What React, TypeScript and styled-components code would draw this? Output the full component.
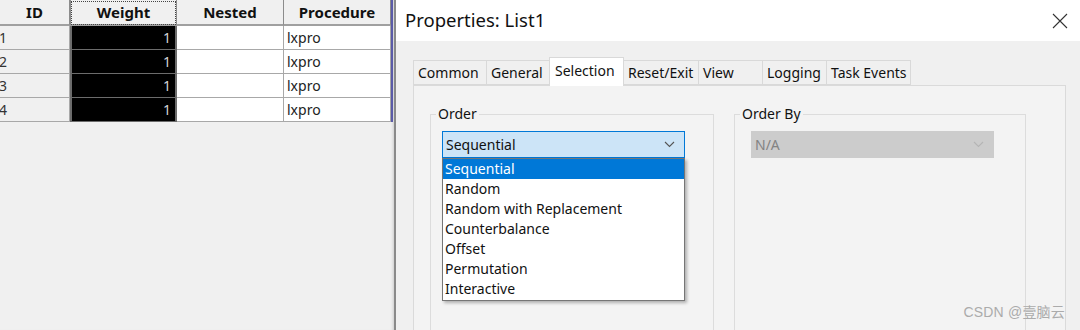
import React from 'react';
import styled, { createGlobalStyle } from 'styled-components';

const GlobalStyle = createGlobalStyle`
	html, body {
		margin: 0;
		padding: 0;
		background: #f0f0f0;
	}
	body {
		font-family: "Noto Sans", "Open Sans", sans-serif;
		color: #1a1a1a;
	}
`;

const UI_FONT = `"Noto Sans", "Open Sans", sans-serif`;

const PageStyle = styled.div`
	display: flex;
	width: 1080px;
	height: 330px;
	overflow: hidden;
	position: relative;
	background: #f0f0f0;
`;

/* ---------- left grid ---------- */

const GridPaneStyle = styled.div`
	width: 394px;
	flex: none;
	background: #f0f0f0;
	border-right: 2px solid #8a8a8a;
	box-shadow: inset -3px 0 3px -2px rgba(0, 0, 0, 0.15);
`;

const GridStyle = styled.div`
	display: grid;
	grid-template-columns: 70px 107px 107px 107px;
	grid-template-rows: 26px repeat(4, 24px);
	width: 391px;
	border-right: 2px solid #5b5ba8;
	font-family: ${UI_FONT};
	font-size: 14px;
`;

const HeadCellStyle = styled.div<{ focused?: boolean }>`
	display: flex;
	align-items: center;
	justify-content: center;
	font-weight: 700;
	font-size: 15px;
	color: #111;
	background: #f0f0f0;
	border-right: 1px solid #8c8c8c;
	border-bottom: 2px solid #a0a0a0;
	box-sizing: border-box;
	padding-bottom: 1px;
	outline: ${p => p.focused ? '1px dotted #444' : 'none'};
	outline-offset: -2px;
	border-left: ${p => p.focused ? '1px solid #8c8c8c' : 'none'};
`;

const CellStyle = styled.div<{ kind?: 'id' | 'sel' | 'plain' }>`
	display: flex;
	align-items: center;
	box-sizing: border-box;
	border-bottom: 1px solid #a8a8a8;
	border-right: 1px solid #a8a8a8;
	padding: 0 3px;
	justify-content: ${p => p.kind === 'sel' ? 'flex-end' : 'flex-start'};
	background: ${p => p.kind === 'id' ? '#f0f0f0' : p.kind === 'sel' ? '#000' : '#fff'};
	color: ${p => p.kind === 'sel' ? '#d4d4d4' : '#222'};
	border-left: ${p => p.kind === 'sel' ? '2px solid #6c6c6c' : 'none'};
	${p => p.kind === 'sel' && 'border-right: 2px solid #6c6c6c; padding-right: 4px; border-bottom-color: #6c6c6c;'}
	${p => p.kind === 'id' && 'text-indent: -4px; color: #333;'}
`;

/* ---------- dialog ---------- */

const DialogStyle = styled.div`
	flex: 1;
	display: flex;
	flex-direction: column;
	background: #f0f0f0;
`;

const TitleBarStyle = styled.div`
	height: 38px;
	flex: none;
	display: flex;
	align-items: center;
	justify-content: space-between;
	padding: 0 12px 3px 9px;
	background: #fff;
	font-family: ${UI_FONT};
	font-size: 18.5px;
	color: #111;
`;

const CloseStyle = styled.svg`
	width: 16px;
	height: 16px;
	margin-top: 3px;
`;

const BodyStyle = styled.div`
	flex: 1;
	padding: 16px 14px 0 17px;
	display: flex;
	flex-direction: column;
`;

const TabRowStyle = styled.div`
	display: flex;
	align-items: flex-end;
	height: 28px;
	font-family: ${UI_FONT};
	font-size: 14px;
`;

const TabStyle = styled.div<{ active?: boolean; width: number }>`
	width: ${p => p.width}px;
	box-sizing: border-box;
	height: ${p => p.active ? 29 : 25}px;
	margin-bottom: ${p => p.active ? -1 : 0}px;
	padding: 0 0 0 ${p => p.active ? 5 : 4}px;
	display: flex;
	align-items: center;
	background: ${p => p.active ? '#fff' : '#f0f0f0'};
	border: 1px solid #d9d9d9;
	border-bottom: ${p => p.active ? 'none' : '1px solid #d9d9d9'};
	margin-right: -1px;
	color: #111;
	position: relative;
	z-index: ${p => p.active ? 1 : 0};
	padding-bottom: ${p => p.active ? 3 : 0}px;
`;

const TabPanelStyle = styled.div`
	flex: 1;
	border: 1px solid #dadada;
	background: #f3f3f3;
	display: flex;
	gap: 20px;
	padding: 19px 0 0 16px;
`;

const GroupStyle = styled.fieldset<{ width: number; inset: number }>`
	width: ${p => p.width}px;
	height: 260px;
	margin: 0;
	box-sizing: border-box;
	border: 1px solid #dcdcdc;
	padding: 8px 0 0 ${p => p.inset}px;
	font-family: ${UI_FONT};
	font-size: 14px;
	color: #111;
`;

const LegendStyle = styled.legend<{ inset: number }>`
	padding: 0 2px;
	margin-left: ${p => 5 - p.inset}px;
	font-size: 14px;
	line-height: 18px;
`;

const ComboWrapStyle = styled.div`
	position: relative;
	width: 243px;
`;

const ComboStyle = styled.div<{ disabled?: boolean }>`
	height: 27px;
	box-sizing: border-box;
	display: flex;
	align-items: center;
	justify-content: space-between;
	padding: 0 9px 0 3px;
	background: ${p => p.disabled ? '#cccccc' : '#cce4f7'};
	border: 1px solid ${p => p.disabled ? '#cccccc' : '#0078d7'};
	color: ${p => p.disabled ? '#838383' : '#111'};
	font-size: 14px;
`;

const ListStyle = styled.div`
	position: absolute;
	left: 0;
	top: 27px;
	width: 243px;
	box-sizing: border-box;
	background: #fff;
	border: 1px solid #767676;
	box-shadow: 2px 2px 3px rgba(0, 0, 0, 0.28);
	padding: 0 0 1px;
	z-index: 5;
`;

const OptionStyle = styled.div<{ selected?: boolean }>`
	height: 20px;
	line-height: 20px;
	padding-left: 2px;
	background: ${p => p.selected ? '#0078d7' : 'transparent'};
	color: ${p => p.selected ? '#fff' : '#111'};
	font-size: 14px;
`;

const WatermarkStyle = styled.div`
	position: absolute;
	right: 15px;
	bottom: 9px;
	font-family: "Liberation Sans", "Noto Sans CJK SC", sans-serif;
	font-size: 14px;
	color: #ababab;
	letter-spacing: 0.2px;
`;

const Chevron = ({ color }: { color: string }) => (
	<svg width="11" height="7" viewBox="0 0 11 7">
		<path d="M1 1 L5.5 5.5 L10 1" fill="none" stroke={color} strokeWidth="1.1" />
	</svg>
);

const rows = [1, 2, 3, 4];

const tabs = [
	{ label: 'Common', width: 74 },
	{ label: 'General', width: 64 },
	{ label: 'Selection', width: 75, active: true },
	{ label: 'Reset/Exit', width: 76 },
	{ label: 'View', width: 65 },
	{ label: 'Logging', width: 65 },
	{ label: 'Task Events', width: 85 },
];

const orderOptions = [
	'Sequential',
	'Random',
	'Random with Replacement',
	'Counterbalance',
	'Offset',
	'Permutation',
	'Interactive',
];

const App = () => {
	return (
		<PageStyle>
			<GlobalStyle />

			<GridPaneStyle>
				<GridStyle>
					<HeadCellStyle>ID</HeadCellStyle>
					<HeadCellStyle focused>Weight</HeadCellStyle>
					<HeadCellStyle>Nested</HeadCellStyle>
					<HeadCellStyle>Procedure</HeadCellStyle>
					{rows.map(r => (
						<React.Fragment key={r}>
							<CellStyle kind="id">{r}</CellStyle>
							<CellStyle kind="sel">1</CellStyle>
							<CellStyle kind="plain" />
							<CellStyle kind="plain">lxpro</CellStyle>
						</React.Fragment>
					))}
				</GridStyle>
			</GridPaneStyle>

			<DialogStyle>
				<TitleBarStyle>
					<span>Properties: List1</span>
					<CloseStyle viewBox="0 0 16 16">
						<path d="M1 1 L15 15 M15 1 L1 15" stroke="#333" strokeWidth="1.1" />
					</CloseStyle>
				</TitleBarStyle>

				<BodyStyle>
					<TabRowStyle>
						{tabs.map(t => (
							<TabStyle key={t.label} active={t.active} width={t.width}>{t.label}</TabStyle>
						))}
					</TabRowStyle>

					<TabPanelStyle>
						<GroupStyle width={284} inset={11}>
							<LegendStyle inset={11}>Order</LegendStyle>
							<ComboWrapStyle>
								<ComboStyle>
									<span>Sequential</span>
									<Chevron color="#555" />
								</ComboStyle>
								<ListStyle>
									{orderOptions.map((o, i) => (
										<OptionStyle key={o} selected={i === 0}>{o}</OptionStyle>
									))}
								</ListStyle>
							</ComboWrapStyle>
						</GroupStyle>

						<GroupStyle width={292} inset={16}>
							<LegendStyle inset={16}>Order By</LegendStyle>
							<ComboWrapStyle>
								<ComboStyle disabled>
									<span>N/A</span>
									<Chevron color="#b5b5b5" />
								</ComboStyle>
							</ComboWrapStyle>
						</GroupStyle>
					</TabPanelStyle>
				</BodyStyle>
			</DialogStyle>

			<WatermarkStyle>CSDN @壹脑云</WatermarkStyle>
		</PageStyle>
	);
};

export default App;
